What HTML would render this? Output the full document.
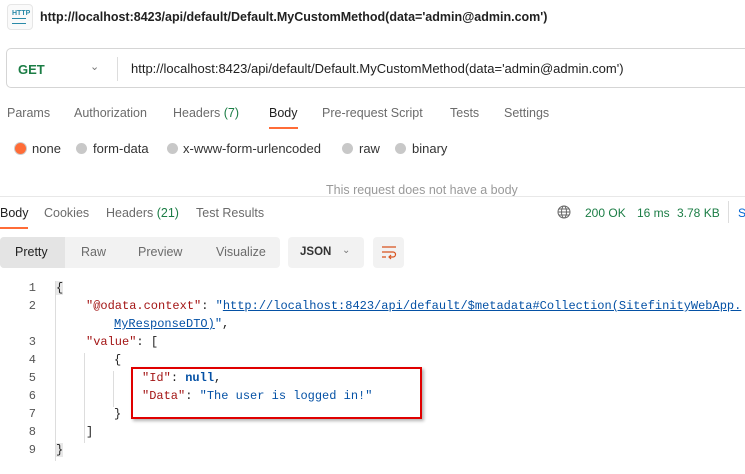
<!DOCTYPE html>
<html><head><style>
body{margin:0;width:745px;height:474px;background:#fff;font-family:"Liberation Sans",sans-serif;position:relative;overflow:hidden;color:#212121}
.a{position:absolute;white-space:nowrap}
.t{font-size:12.5px;color:#6b6b6b}
.m{font-family:"Liberation Mono",monospace;font-size:12px;position:absolute;white-space:pre}
.ln{color:#555;width:30px;text-align:right;left:6px}
.k{color:#a31515}.s{color:#0451a5}.p{color:#212121}
.u{color:#0451a5;text-decoration:underline}
.dot{position:absolute;width:11px;height:11px;border-radius:50%;background:#c8c8c8;top:143px}
.r{font-size:13px;color:#333;top:141px}
</style></head><body>
<div class="a" style="left:7px;top:4px;width:24px;height:24px;border:1px solid #e6e6e6;border-radius:4px;background:#fafafa"></div>
<div class="a" style="left:12px;top:10px;font-size:7px;color:#2a8aa8;font-weight:bold">HTTP</div>
<div class="a" style="left:12px;top:18px;width:14px;height:4px;border-top:1px solid #2a8aa8;border-bottom:1px solid #2a8aa8"></div>
<div class="a" style="left:40px;top:10px;font-size:12.5px;font-weight:bold;color:#212121">http://localhost:8423/api/default/Default.MyCustomMethod(data='admin@admin.com')</div>
<div class="a" style="left:6px;top:48px;width:745px;height:40px;border:1px solid #d5d5d5;border-radius:5px;box-sizing:border-box"></div>
<div class="a" style="left:18px;top:62px;font-size:13px;font-weight:bold;color:#1b7d45">GET</div>
<div class="a" style="left:90px;top:60px;font-size:11px;color:#777">&#8964;</div>
<div class="a" style="left:117px;top:57px;width:1px;height:24px;background:#ddd"></div>
<div class="a" style="left:131px;top:61px;font-size:13px;color:#212121">http://localhost:8423/api/default/Default.MyCustomMethod(data='admin@admin.com')</div>
<div class="a t" style="left:7px;top:106px">Params</div>
<div class="a t" style="left:74px;top:106px">Authorization</div>
<div class="a t" style="left:173px;top:106px">Headers <span style="color:#1b7d45">(7)</span></div>
<div class="a" style="left:269px;top:106px;font-size:12.5px;color:#212121">Body</div>
<div class="a" style="left:269px;top:127px;width:29px;height:2px;background:#ff6c37"></div>
<div class="a t" style="left:322px;top:106px">Pre-request Script</div>
<div class="a t" style="left:450px;top:106px">Tests</div>
<div class="a t" style="left:504px;top:106px">Settings</div>
<div class="dot" style="left:15px;background:#ff6c37;box-shadow:0 0 0 1px #ccc"></div>
<div class="a r" style="left:32px">none</div>
<div class="dot" style="left:76px"></div>
<div class="a r" style="left:93px">form-data</div>
<div class="dot" style="left:167px"></div>
<div class="a r" style="left:183px">x-www-form-urlencoded</div>
<div class="dot" style="left:342px"></div>
<div class="a r" style="left:359px">raw</div>
<div class="dot" style="left:395px"></div>
<div class="a r" style="left:412px">binary</div>
<div class="a" style="left:326px;top:183px;font-size:12.5px;color:#999">This request does not have a body</div>
<div class="a" style="left:0;top:196px;width:745px;height:1px;background:#e8e8e8"></div>
<div class="a" style="left:0;top:206px;font-size:12.5px;color:#212121">Body</div>
<div class="a" style="left:0;top:227px;width:28px;height:2px;background:#ff6c37"></div>
<div class="a t" style="left:44px;top:206px">Cookies</div>
<div class="a t" style="left:106px;top:206px">Headers <span style="color:#1b7d45">(21)</span></div>
<div class="a t" style="left:196px;top:206px">Test Results</div>
<svg class="a" style="left:557px;top:205px" width="14" height="14" viewBox="0 0 14 14" fill="none" stroke="#666" stroke-width="1"><circle cx="7" cy="7" r="6"/><ellipse cx="7" cy="7" rx="2.5" ry="6"/><path d="M1 7h12M2 4h10M2 10h10"/></svg>
<div class="a" style="left:585px;top:206px;font-size:12px;color:#1b7d45">200 OK</div>
<div class="a" style="left:637px;top:206px;font-size:12px;color:#1b7d45">16 ms</div>
<div class="a" style="left:677px;top:206px;font-size:12px;color:#1b7d45">3.78 KB</div>
<div class="a" style="left:728px;top:201px;width:1px;height:22px;background:#ddd"></div>
<div class="a" style="left:738px;top:206px;font-size:12px;color:#0265d2">S</div>
<div class="a" style="left:0;top:237px;width:280px;height:31px;background:#f2f2f2;border-radius:4px"></div>
<div class="a" style="left:0;top:237px;width:65px;height:31px;background:#e4e4e4;border-radius:4px 0 0 4px"></div>
<div class="a" style="left:15px;top:245px;font-size:12.5px;color:#212121">Pretty</div>
<div class="a t" style="left:81px;top:245px">Raw</div>
<div class="a t" style="left:138px;top:245px">Preview</div>
<div class="a t" style="left:216px;top:245px">Visualize</div>
<div class="a" style="left:288px;top:237px;width:76px;height:31px;background:#f2f2f2;border-radius:4px"></div>
<div class="a" style="left:300px;top:246px;font-size:11.5px;font-weight:bold;color:#333">JSON</div>
<div class="a" style="left:342px;top:245px;font-size:10px;color:#777">&#8964;</div>
<div class="a" style="left:373px;top:237px;width:31px;height:31px;background:#f2f2f2;border-radius:4px"></div>
<svg class="a" style="left:381px;top:245px" width="16" height="15" viewBox="0 0 16 15" fill="none" stroke="#d9531e" stroke-width="1.2"><path d="M1 2h14M1 7h11a2.5 2.5 0 0 1 0 5H8M10 10l-2 2 2 2M1 12h4"/></svg>
<div class="m ln" style="top:281px">1</div>
<div class="m ln" style="top:299px">2</div>
<div class="m ln" style="top:335px">3</div>
<div class="m ln" style="top:353px">4</div>
<div class="m ln" style="top:371px">5</div>
<div class="m ln" style="top:389px">6</div>
<div class="m ln" style="top:407px">7</div>
<div class="m ln" style="top:425px">8</div>
<div class="m ln" style="top:443px">9</div>
<div class="a" style="left:55px;top:281px;width:1px;height:180px;background:#ddd"></div>
<div class="a" style="left:84px;top:353px;width:1px;height:90px;background:#ddd"></div>
<div class="a" style="left:113px;top:371px;width:1px;height:36px;background:#ddd"></div>
<div class="m p" style="left:56px;top:281px;background:#e8e8e8">{</div>
<div class="m" style="left:86px;top:299px"><span class="k">"@odata.context"</span><span class="p">: </span><span class="s">"</span><span class="u">http://localhost:8423/api/default/$metadata#Collection(SitefinityWebApp.</span></div>
<div class="m" style="left:114px;top:317px"><span class="u">MyResponseDTO)</span><span class="s">"</span><span class="p">,</span></div>
<div class="m" style="left:86px;top:335px"><span class="k">"value"</span><span class="p">: [</span></div>
<div class="m p" style="left:114px;top:353px">{</div>
<div class="m" style="left:142px;top:371px"><span class="k">"Id"</span><span class="p">: </span><b class="s">null</b><span class="p">,</span></div>
<div class="m" style="left:142px;top:389px"><span class="k">"Data"</span><span class="p">: </span><span class="s">"The user is logged in!"</span></div>
<div class="m p" style="left:114px;top:407px">}</div>
<div class="m p" style="left:86px;top:425px">]</div>
<div class="m p" style="left:56px;top:443px;background:#e8e8e8">}</div>
<div class="a" style="left:131px;top:367px;width:291px;height:52px;border:2px solid #e00000;box-sizing:border-box;box-shadow:2px 2px 3px rgba(0,0,0,.3)"></div>
</body></html>
